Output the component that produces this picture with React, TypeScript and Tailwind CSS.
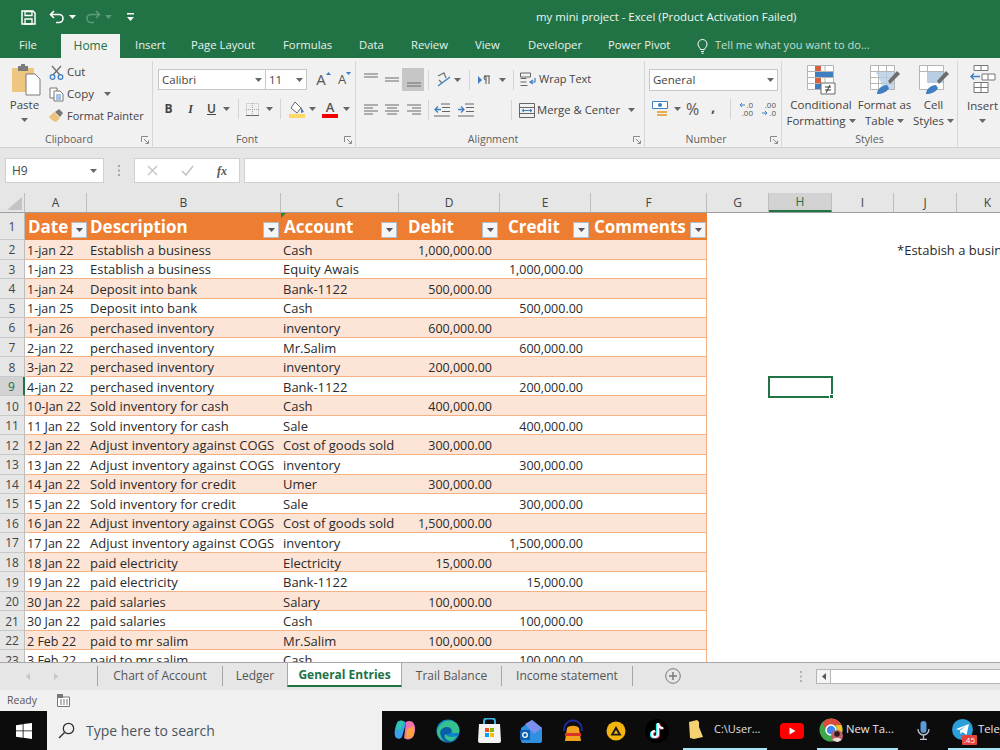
import React from "react";

type Row = [string, string, string, string, string];
const rows: Row[] = [
  ["1-jan 22", "Establish a business", "Cash", "1,000,000.00", ""],
  ["1-jan 23", "Establish a business", "Equity Awais", "", "1,000,000.00"],
  ["1-jan 24", "Deposit into bank", "Bank-1122", "500,000.00", ""],
  ["1-jan 25", "Deposit into bank", "Cash", "", "500,000.00"],
  ["1-jan 26", "perchased inventory", "inventory", "600,000.00", ""],
  ["2-jan 22", "perchased inventory", "Mr.Salim", "", "600,000.00"],
  ["3-jan 22", "perchased inventory", "inventory", "200,000.00", ""],
  ["4-jan 22", "perchased inventory", "Bank-1122", "", "200,000.00"],
  ["10-Jan 22", "Sold inventory for cash", "Cash", "400,000.00", ""],
  ["11 Jan 22", "Sold inventory for cash", "Sale", "", "400,000.00"],
  ["12 Jan 22", "Adjust inventory against COGS", "Cost of goods sold", "300,000.00", ""],
  ["13 Jan 22", "Adjust inventory against COGS", "inventory", "", "300,000.00"],
  ["14 Jan 22", "Sold inventory for credit", "Umer", "300,000.00", ""],
  ["15 Jan 22", "Sold inventory for credit", "Sale", "", "300,000.00"],
  ["16 Jan 22", "Adjust inventory against COGS", "Cost of goods sold", "1,500,000.00", ""],
  ["17 Jan 22", "Adjust inventory against COGS", "inventory", "", "1,500,000.00"],
  ["18 Jan 22", "paid electricity", "Electricity", "15,000.00", ""],
  ["19 Jan 22", "paid electricity", "Bank-1122", "", "15,000.00"],
  ["30 Jan 22", "paid salaries", "Salary", "100,000.00", ""],
  ["30 Jan 22", "paid salaries", "Cash", "", "100,000.00"],
  ["2 Feb 22", "paid to mr salim", "Mr.Salim", "100,000.00", ""],
  ["3 Feb 22", "paid to mr salim", "Cash", "", "100,000.00"],
];

const Caret = ({ c = "#666" }: { c?: string }) => (
  <svg width="7" height="4" viewBox="0 0 7 4"><path d="M0 0h7L3.5 4z" fill={c} /></svg>
);

const Lines = ({ d }: { d: string }) => (
  <svg width="15" height="16" viewBox="0 0 15 16"><path d={d} stroke="#6b6b6b" strokeWidth="1" fill="none" /></svg>
);

const Sep = () => <div className="w-px h-[20px] bg-[#d4d4d4]" />;

const Filter = () => (
  <span className="w-[16px] h-[16px] shrink-0 self-end mb-[2px] flex items-center justify-center bg-[#f3f5f8] border border-[#b4bcc6]">
    <Caret c="#555" />
  </span>
);

function Group({ label, launcher = true, className, children }: { label: string; launcher?: boolean; className: string; children: React.ReactNode }) {
  return (
    <div className={"flex flex-col shrink-0 border-r border-[#d6d6d6] mt-[3px] " + className}>
      <div className="h-[72px] flex flex-col">{children}</div>
      <div className="h-[14px] flex items-center">
        <span className={"flex-1 text-center text-[10.6px] text-[#5f5f5f] " + (launcher ? "pr-[3px]" : "")}>{label}</span>
        {launcher && (
          <svg className="mr-[3px]" width="8" height="8" viewBox="0 0 8 8"><path d="M.5 6V.5H7M3 3l4 4M4.5 7.5h3v-3" stroke="#8a8a8a" fill="none" /></svg>
        )}
      </div>
    </div>
  );
}

const StyleBtn = ({ icon, a, b, w }: { icon: React.ReactNode; a: string; b: string; w: string }) => (
  <div className={"flex flex-col items-center shrink-0 " + w}>
    <div className="h-[35px] mt-[1px] flex items-center">{icon}</div>
    <span className="text-[11.5px] leading-[16px] text-[#444] whitespace-nowrap">{a}</span>
    <span className="text-[11.5px] leading-[16px] text-[#444] whitespace-nowrap flex items-center gap-[3px]">{b}<Caret /></span>
  </div>
);

const colH: [string, string][] = [
  ["A", "w-[62px]"], ["B", "w-[194px]"], ["C", "w-[118px]"], ["D", "w-[101px]"], ["E", "w-[91px]"], ["F", "w-[116px]"],
  ["G", "w-[62px]"], ["H", "w-[63px]"], ["I", "w-[62px]"], ["J", "w-[63px]"], ["K", "w-[62px]"],
];

const Tab = ({ t, className = "" }: { t: string; className?: string }) => (
  <span className={"text-[11.3px] -mt-[1px] text-[#e8f1ec] whitespace-nowrap " + className}>{t}</span>
);

export default function App() {
  return (
    <div className="w-[1000px] h-[750px] overflow-hidden flex flex-col bg-[#e6e6e6] font-['Open_Sans',sans-serif] text-[#333]">
      {/* title */}
      <div className="h-[34px] shrink-0 bg-[#217346] flex items-center">
        <svg className="ml-[21px]" width="15" height="15" viewBox="0 0 15 15"><path d="M1 1h11l2 2v11H1z" fill="none" stroke="#fff" strokeWidth="1.5" /><path d="M4 1.5h7v4H4zM4 9h7v5H4z" fill="none" stroke="#fff" strokeWidth="1.3" /></svg>
        <svg className="ml-[13px]" width="16" height="14" viewBox="0 0 16 14"><path d="M5 1 1.5 4.500 5 8M2 4.500h8a4 4 0 0 1 0 8H7" stroke="#fff" strokeWidth="1.6" fill="none" /></svg>
        <span className="ml-[4px]"><Caret c="#fff" /></span>
        <svg className="ml-[9px]" width="16" height="14" viewBox="0 0 16 14"><path d="M11 1l3.500 3.500L11 8M14 4.500H6a4 4 0 0 0 0 8h3" stroke="#5c9a78" strokeWidth="1.6" fill="none" /></svg>
        <span className="ml-[4px]"><Caret c="#5c9a78" /></span>
        <svg className="ml-[15px]" width="7" height="8" viewBox="0 0 7 8"><path d="M0 0h7v1.500H0zM0 4h7L3.500 8z" fill="#fff" /></svg>
        <span className="ml-[402px] text-[11.4px] text-[#f0f6f2] whitespace-nowrap">my mini project - Excel (Product Activation Failed)</span>
      </div>
      {/* tabs */}
      <div className="h-[24px] shrink-0 bg-[#217346] flex items-center">
        <Tab t="File" className="ml-[19px] w-[42px]" />
        <span className="w-[59px] h-full bg-[#f1f1f1] text-[#217346] text-[12px] flex items-center justify-center">Home</span>
        <Tab t="Insert" className="ml-[15px] w-[56px]" />
        <Tab t="Page Layout" className="w-[92px]" />
        <Tab t="Formulas" className="w-[76px]" />
        <Tab t="Data" className="w-[52px]" />
        <Tab t="Review" className="w-[64px]" />
        <Tab t="View" className="w-[53px]" />
        <Tab t="Developer" className="w-[80px]" />
        <Tab t="Power Pivot" className="w-[89px]" />
        <svg width="11" height="15" viewBox="0 0 11 15"><path d="M3.500 10.500C3 8.500 1 8 1 5a4.500 4.500 0 0 1 9 0c0 3-2 3.500-2.500 5.500zM4 12.500h3M4.500 14.300h2" stroke="#fff" fill="none" /></svg>
        <span className="ml-[7px] -mt-[1px] text-[11.1px] text-[#c7dccf] whitespace-nowrap">Tell me what you want to do...</span>
      </div>
      {/* ribbon */}
      <div className="h-[90px] shrink-0 bg-[#f1f1f1] border-b border-[#d2d2d2] flex">
        <Group label="Clipboard" className="w-[153px]">
          <div className="flex h-full">
            <div className="w-[49px] flex flex-col items-center">
              <svg className="mt-[3px] ml-[3px]" width="30" height="32" viewBox="0 0 30 32">
                <path d="M1 4h22v24H1z" fill="#efc67f" /><path d="M7 2h10v5H7z" fill="#7b7b7b" /><path d="M10 0h4v3h-4z" fill="#7b7b7b" />
                <path d="M15 10h9l5 5v16H15z" fill="#fff" stroke="#7b7b7b" />
              </svg>
              <span className="text-[11.5px] leading-[16px] mt-[1px] text-[#444]">Paste</span>
              <span className="mt-[5px]"><Caret /></span>
            </div>
            <div className="flex flex-col gap-[6px] pt-[3px] text-[11.5px] leading-[16px] text-[#444]">
              <div className="flex items-center gap-[3px] h-[16px]">
                <svg width="15" height="15" viewBox="0 0 15 15"><path d="M3 1l8 9M12 1L4 10" stroke="#6d6d6d" strokeWidth="1.3" /><circle cx="3.500" cy="12" r="2.300" fill="none" stroke="#3f7fc1" strokeWidth="1.300" /><circle cx="11.500" cy="12" r="2.300" fill="none" stroke="#3f7fc1" strokeWidth="1.300" /></svg>
                <span>Cut</span>
              </div>
              <div className="flex items-center gap-[3px] h-[16px]">
                <svg width="15" height="15" viewBox="0 0 15 15"><path d="M1 1h7v10H1z" fill="#fff" stroke="#777" /><path d="M5 4h6l3 3v7H5z" fill="#fff" stroke="#777" /><path d="M7 8h5M7 10h5M7 12h5" stroke="#4a86c5" /></svg>
                <span>Copy</span><span className="ml-[7px]"><Caret /></span>
              </div>
              <div className="flex items-center gap-[3px] h-[16px]">
                <svg width="15" height="14" viewBox="0 0 15 14"><path d="M0 8l5-5 6 6-4 4C5 13 2 10 0 8z" fill="#eec27b" /><path d="M6 3l4-3 4 4-3 4z" fill="#777" /></svg>
                <span className="text-[11px]">Format Painter</span>
              </div>
            </div>
          </div>
        </Group>
        <Group label="Font" className="w-[203px]">
          <div className="flex items-center h-[21px] mt-[8px] pl-[5px]">
            <div className="w-[108px] h-[21px] bg-white border border-[#c6c6c6] flex items-center justify-between px-[3px] text-[11.5px] text-[#444]"><span>Calibri</span><Caret /></div>
            <div className="w-[41px] h-[21px] bg-white border border-[#c6c6c6] border-l-0 flex items-center justify-between px-[3px] text-[11.5px] text-[#444]"><span>11</span><Caret /></div>
            <span className="ml-[6px] text-[15px] leading-[21px] text-[#555] w-[21px] flex items-start justify-center">A<svg className="mt-[3px]" width="5" height="3" viewBox="0 0 5 3"><path d="M0 3h5L2.500 0z" fill="#3f7fc1" /></svg></span>
            <span className="text-[13px] leading-[21px] text-[#555] w-[21px] flex items-start justify-center">A<svg className="mt-[3px]" width="5" height="3" viewBox="0 0 5 3"><path d="M0 0h5L2.500 3z" fill="#3f7fc1" /></svg></span>
          </div>
          <div className="flex items-center h-[20px] mt-[9px] pl-[10px] text-[12px] text-[#444]">
            <span className="w-[11px] text-center font-bold">B</span>
            <span className="w-[11px] ml-[11px] text-center italic font-semibold font-['Liberation_Serif',serif]">I</span>
            <span className="w-[11px] ml-[10px] text-center underline font-semibold">U</span>
            <span className="ml-[6px]"><Caret /></span>
            <span className="ml-[8px]"><Sep /></span>
            <svg className="ml-[7px]" width="13" height="13" viewBox="0 0 13 13"><path d="M.5.500h12v12H.5z" fill="none" stroke="#b5b5b5" strokeDasharray="1 1" /><path d="M6.500 0v13M0 6.500h13" stroke="#a0a0a0" strokeDasharray="1 1" /><path d="M0 12.500h13" stroke="#666" /></svg>
            <span className="ml-[7px]"><Caret /></span>
            <span className="ml-[7px]"><Sep /></span>
            <svg className="ml-[8px]" width="16" height="17" viewBox="0 0 16 17"><path d="M6 1l6 6-4 5-6-5z" fill="#fff" stroke="#666" /><path d="M12 6l3 5-3 1z" fill="#3f7fc1" /><path d="M0 13h16v4H0z" fill="#ffd966" /></svg>
            <span className="ml-[4px]"><Caret /></span>
            <span className="ml-[6px] flex flex-col items-center w-[16px]">
              <span className="text-[13px] leading-[13px] font-semibold text-[#555]">A</span>
              <span className="w-[16px] h-[4px] bg-[#f00000]" />
            </span>
            <span className="ml-[5px]"><Caret /></span>
          </div>
        </Group>
        <Group label="Alignment" className="w-[289px]">
          <div className="flex items-center h-[23px] mt-[7px] pl-[7px]">
            <span className="w-[15px]"><Lines d="M1 2h14M1 5h14" /></span>
            <span className="w-[15px] ml-[6px]"><Lines d="M1 6h14M1 9h14" /></span>
            <span className="w-[22px] h-[23px] ml-[3px] bg-[#c6c6c6] flex items-center justify-center"><Lines d="M1 11h14M1 14h14" /></span>
            <span className="ml-[4px]"><Sep /></span>
            <svg className="ml-[7px]" width="15" height="15" viewBox="0 0 15 15"><path d="M2 4l6-3 2 5M3 8l3 3" stroke="#777" strokeWidth="1.300" fill="none" /><path d="M2 14l12-9" stroke="#3f7fc1" strokeWidth="1.300" /></svg>
            <span className="ml-[3px]"><Caret /></span>
            <span className="ml-[8px]"><Sep /></span>
            <svg className="ml-[8px]" width="13" height="10" viewBox="0 0 13 10"><path d="M0 1l4 4-4 4z" fill="#3f7fc1" /><path d="M6 1h6M8 1v8M11 1v8M8 5a2 2 0 0 1-2-2 2 2 0 0 1 2-2" stroke="#555" fill="none" /></svg>
            <span className="ml-[8px]"><Caret /></span>
            <span className="ml-[7px]"><Sep /></span>
            <svg className="ml-[6px]" width="17" height="16" viewBox="0 0 17 16"><path d="M.5 1h10v4H.5zM.5 6.500h6M.5 10h6M.5 13.500h7" stroke="#666" fill="none" /><path d="M10 10h5V6M13 8l-3 2 3 2" stroke="#3f7fc1" fill="none" strokeWidth="1.200" /></svg>
            <span className="ml-[2px] -mt-[1px] text-[11px] leading-[16px] text-[#444] whitespace-nowrap">Wrap Text</span>
          </div>
          <div className="flex items-center h-[20px] mt-[9px] pl-[7px]">
            <span className="w-[15px]"><Lines d="M1 3h14M1 6h9M1 9h14M1 12h9" /></span>
            <span className="w-[15px] ml-[6px]"><Lines d="M1 3h14M3 6h10M1 9h14M3 12h10" /></span>
            <span className="w-[15px] ml-[7px]"><Lines d="M1 3h14M6 6h9M1 9h14M6 12h9" /></span>
            <span className="ml-[7px]"><Sep /></span>
            <svg className="ml-[5px]" width="16" height="14" viewBox="0 0 16 14"><path d="M7 1h9M8 4.500h8M8 8.500h8M0 13h16" stroke="#666" /><path d="M7 6.500H1M4 3.500l-3 3 3 3" stroke="#3f7fc1" strokeWidth="1.300" fill="none" /></svg>
            <svg className="ml-[8px]" width="16" height="14" viewBox="0 0 16 14"><path d="M7 1h9M8 4.500h8M8 8.500h8M0 13h16" stroke="#666" /><path d="M0 6.500h6M3 3.500l3 3-3 3" stroke="#3f7fc1" strokeWidth="1.300" fill="none" /></svg>
            <span className="ml-[37px]"><Sep /></span>
            <svg className="ml-[7px]" width="16" height="15" viewBox="0 0 16 15"><path d="M.5.500h15v14H.5zM.5 4.500h15M.5 10.500h15" stroke="#666" fill="none" /><path d="M3 7.500h10M5 6l-2 1.500L5 9M11 6l2 1.500L11 9" stroke="#3f7fc1" fill="none" /></svg>
            <span className="ml-[2px] text-[11.3px] leading-[16px] text-[#444] whitespace-nowrap">Merge &amp; Center</span>
            <span className="ml-[8px]"><Caret /></span>
          </div>
        </Group>
        <Group label="Number" className="w-[137px]">
          <div className="w-[129px] h-[22px] ml-[4px] mt-[8px] bg-white border border-[#c6c6c6] flex items-center justify-between px-[3px] text-[11.5px] text-[#444]"><span>General</span><Caret /></div>
          <div className="flex items-center h-[20px] mt-[8px] pl-[7px]">
            <svg width="16" height="16" viewBox="0 0 16 16"><path d="M.5.500h15v7H.5z" fill="#fff" stroke="#3f7fc1" /><circle cx="8" cy="4" r="2" fill="#3f7fc1" /><path d="M5 10h10v2H5zM5 13h10v2H5z" fill="#e9ad4f" /></svg>
            <span className="ml-[6px]"><Caret /></span>
            <span className="ml-[5px] w-[16px] text-[16px] leading-[20px] text-[#555]">%</span>
            <span className="ml-[9px] w-[5px] -mt-[5px] text-[15px] leading-[15px] font-bold text-[#555]">,</span>
            <span className="ml-[14px]"><Sep /></span>
            <span className="ml-[6px] flex flex-col w-[16px] items-end text-[8px] leading-[8px] text-[#555]">
              <span className="flex items-center gap-px"><svg width="6" height="6" viewBox="0 0 6 6"><path d="M6 3H1M3 1 1 3l2 2" stroke="#3f7fc1" fill="none" /></svg>.0</span>
              <span>.00</span>
            </span>
            <span className="ml-[7px] flex flex-col w-[16px] items-end text-[8px] leading-[8px] text-[#555]">
              <span>.00</span>
              <span className="flex items-center gap-px"><svg width="6" height="6" viewBox="0 0 6 6"><path d="M0 3h5M3 1l2 2-2 2" stroke="#3f7fc1" fill="none" /></svg>.0</span>
            </span>
          </div>
        </Group>
        <Group label="Styles" launcher={false} className="w-[176px]">
          <div className="flex">
            <StyleBtn w="w-[78px]" a="Conditional" b="Formatting" icon={
              <svg width="29" height="30" viewBox="0 0 29 30"><path d="M.5.500h26v24H.5zM.5 6.500h26M.5 12.500h26M.5 18.500h26M9 .5v24M18 .5v24" stroke="#b5b5b5" fill="#fff" /><path d="M8 1h6v5H8zM8 13h6v5H8z" fill="#d9603c" /><path d="M8 7h18v5H8zM8 19h6v5H8z" fill="#3f7fc1" /><path d="M14 18h14v11H14z" fill="#fff" stroke="#666" /><path d="M18 22h6M18 25h6M23 20l-4 8" stroke="#333" /></svg>
            } />
            <StyleBtn w="w-[49px]" a="Format as" b="Table" icon={
              <svg width="30" height="30" viewBox="0 0 30 30"><path d="M.5.500h24v24H.5zM.5 6.500h24M.5 12.500h24M.5 18.500h24M8.500.5v24M16.500.5v24" stroke="#b5b5b5" fill="#fff" /><path d="M6 7h18v17H14z" fill="#b9cde5" opacity=".8" /><path d="M18 16L27 6l3 3-10 10z" fill="#6d6d6d" /><path d="M7 29c0-5 5-9 10-9l2 3c-2 4-7 6-12 6z" fill="#3f7fc1" /></svg>
            } />
            <StyleBtn w="w-[49px]" a="Cell" b="Styles" icon={
              <svg width="30" height="30" viewBox="0 0 30 30"><path d="M.5.500h24v24H.5zM.5 6.500h24M8.500.5v6" stroke="#b5b5b5" fill="#fff" /><path d="M8 7h16v11H8z" fill="#b9cde5" /><path d="M18 16L27 6l3 3-10 10z" fill="#6d6d6d" /><path d="M7 29c0-5 5-9 10-9l2 3c-2 4-7 6-12 6z" fill="#3f7fc1" /></svg>
            } />
          </div>
        </Group>
        <div className="flex-1 flex flex-col items-center mt-[3px] pl-[7px]">
          <svg className="mt-[4px]" width="26" height="29" viewBox="0 0 26 29"><path d="M4 .5h14v5H4zM11 .5v5M12 9h13v6H12zM18 9v6M4 17.500h14v10H4zM11 17.500v10M4 22.500h14" stroke="#777" fill="#fff" /><path d="M10 11.500H1M4 8.500l-3 3 3 3" stroke="#3f7fc1" strokeWidth="1.500" fill="none" /></svg>
          <span className="text-[11.5px] leading-[16px] text-[#444] mt-[4px]">Insert</span>
          <span className="mt-[5px]"><Caret /></span>
        </div>
      </div>
      {/* formula bar */}
      <div className="h-[45px] shrink-0 bg-[#e6e6e6] flex items-start pt-[10px] pl-[5px]">
        <div className="w-[99px] h-[25px] bg-white border border-[#d0d0d0] flex items-center justify-between pl-[6px] pr-[6px] text-[12px] text-[#444]"><span>H9</span><Caret /></div>
        <svg className="ml-[13px] mt-[7px]" width="3" height="11" viewBox="0 0 3 11"><path d="M1 0h2v2H1zM1 4.500h2v2H1zM1 9h2v2H1z" fill="#a6a6a6" /></svg>
        <div className="ml-[14px] w-[106px] h-[25px] bg-white border border-[#d0d0d0] flex items-center">
          <svg className="ml-[12px]" width="11" height="11" viewBox="0 0 11 11"><path d="M1 1l9 9M10 1l-9 9" stroke="#c4c4c4" strokeWidth="1.400" /></svg>
          <svg className="ml-[23px]" width="13" height="11" viewBox="0 0 13 11"><path d="M1 6l4 4 7-9" stroke="#c4c4c4" strokeWidth="1.600" fill="none" /></svg>
          <span className="ml-[23px] text-[12px] italic font-['Liberation_Serif',serif] text-[#555] font-bold">fx</span>
        </div>
        <div className="ml-[4px] flex-1 h-[25px] bg-white border border-[#d0d0d0] border-r-0" />
      </div>
      {/* sheet */}
      <div className="flex-1 min-h-0 overflow-hidden bg-white text-[13px] leading-[19px] text-[#2a2a2a]">
        <div className="flex h-[19px] bg-[#e6e6e6] border-b border-[#a0a0a0] box-content">
          <div className="w-[25px] shrink-0 border-r border-[#bdbdbd] flex items-end justify-end p-[2px]">
            <svg width="15" height="13" viewBox="0 0 15 13"><path d="M15 0v13H0z" fill="#c4c4c4" /></svg>
          </div>
          {colH.map(([c, w]) => (
            <div key={c} className={"shrink-0 flex items-center justify-center text-[12px] border-r border-[#bdbdbd] " + w + (c === "H" ? " bg-[#d2d2d2] text-[#217346] border-b-2 border-b-[#217346]" : " text-[#444]")}>{c}</div>
          ))}
        </div>
        <div className="flex h-[27px]">
          <div className="w-[25px] shrink-0 bg-[#e6e6e6] border-r border-[#bdbdbd] border-b border-b-[#c8c8c8] flex items-center justify-center text-[#444] text-[12px]">1</div>
          <div className="w-[682px] shrink-0 flex bg-[#ed7d31] text-white font-bold text-[17px] whitespace-nowrap items-stretch">
            <div className="w-[62px] pl-[3px] flex items-center justify-between">Date<Filter /></div>
            <div className="w-[194px] pl-[3px] pr-[2px] flex items-center justify-between">Description<Filter /></div>
            <div className="w-[118px] pl-[3px] pr-[2px] flex items-center justify-between relative">
              <span className="absolute left-0 top-0 w-0 h-0 border-t-[5px] border-t-[#1e8a3c] border-r-[5px] border-r-transparent" />
              Account<Filter />
            </div>
            <div className="w-[101px] pl-[9px] pr-[2px] flex items-center justify-between">Debit<Filter /></div>
            <div className="w-[91px] pl-[8px] pr-[2px] flex items-center justify-between">Credit<Filter /></div>
            <div className="w-[116px] pl-[3px] pr-[1px] flex items-center justify-between">Comments<Filter /></div>
          </div>
        </div>
        {rows.map((r, i) => {
          const n = i + 2;
          const sel = n === 9;
          return (
            <div key={n} className="flex h-[19.55px]">
              <div className={"w-[25px] shrink-0 border-b border-b-[#c8c8c8] flex items-center justify-center pt-[1px] text-[12px] " + (sel ? "bg-[#d2d2d2] text-[#217346] border-r-2 border-r-[#217346]" : "bg-[#e6e6e6] text-[#444] border-r border-r-[#bdbdbd]")}>{n}</div>
              <div className={"w-[682px] shrink-0 flex items-center pt-[2px] whitespace-nowrap border-b border-b-[#f4b183] border-r border-r-[#f4b183] " + (i % 2 === 0 ? "bg-[#fce4d6]" : "bg-white")}>
                <div className="w-[62px] pl-[2px] text-[12.5px]">{r[0]}</div>
                <div className="w-[194px] pl-[3px]">{r[1]}</div>
                <div className="w-[118px] pl-[2px] overflow-hidden">{r[2]}</div>
                <div className="w-[101px] pr-[8px] text-right text-[12.5px]">{r[3]}</div>
                <div className="w-[91px] pr-[8px] text-right text-[12.5px]">{r[4]}</div>
              </div>
              <div className="w-[62px] shrink-0" />
              <div className={"w-[65px] shrink-0 self-start " + (sel ? "-ml-px -mt-[1px] h-[22px] border-2 border-[#217346] relative" : "-ml-px")}>
                {sel && <span className="absolute -right-[3px] -bottom-[3px] w-[5px] h-[5px] bg-[#217346] border border-white" />}
              </div>
              <div className="w-[61px] shrink-0" />
              {n === 2 && <div className="pl-[3px] pt-[1px] whitespace-nowrap">*Estabish a business</div>}
            </div>
          );
        })}
      </div>
      {/* sheet tabs */}
      <div className="h-[28px] shrink-0 bg-[#e6e6e6] border-t border-t-[#a8a8a8] flex items-start text-[12px] text-[#555] whitespace-nowrap">
        <div className="w-[98px] h-[20px] mt-[3px] border-r border-[#a6a6a6] flex items-center pl-[26px] gap-[24px]">
          <svg width="4" height="7" viewBox="0 0 4 7"><path d="M4 0v7L0 3.500z" fill="#c6c6c6" /></svg>
          <svg width="4" height="7" viewBox="0 0 4 7"><path d="M0 0v7l4-3.500z" fill="#c6c6c6" /></svg>
        </div>
        <div className="w-[125px] h-[20px] mt-[3px] border-r border-[#a6a6a6] flex items-center justify-center">Chart of Account</div>
        <div className="w-[64px] h-[20px] mt-[3px] flex items-center justify-center">Ledger</div>
        <div className="w-[115px] h-[24px] pt-[2px] bg-white border-x border-[#a8a8a8] border-b-2 border-b-[#217346] flex items-center justify-center font-bold text-[#217346]">General Entries</div>
        <div className="w-[100px] h-[20px] mt-[3px] border-r border-[#a6a6a6] flex items-center justify-center">Trail Balance</div>
        <div className="w-[131px] h-[20px] mt-[3px] border-r border-[#a6a6a6] flex items-center justify-center">Income statement</div>
        <svg className="ml-[32px] mt-[5px]" width="16" height="16" viewBox="0 0 16 16"><circle cx="8" cy="8" r="7.300" fill="none" stroke="#7a7a7a" /><path d="M8 4v8M4 8h8" stroke="#7a7a7a" strokeWidth="1.500" /></svg>
        <svg className="ml-[119px] mt-[8px]" width="3" height="11" viewBox="0 0 3 11"><path d="M0 0h2v2H0zM0 4.500h2v2H0zM0 9h2v2H0z" fill="#b0b0b0" /></svg>
        <div className="ml-[13px] mt-[6px] flex-1 h-[15px] flex border border-[#b5b5b5] border-r-0 bg-white">
          <div className="w-[14px] border-r border-[#b5b5b5] bg-[#f4f4f4] flex items-center justify-center">
            <svg width="4" height="7" viewBox="0 0 4 7"><path d="M4 0v7L0 3.500z" fill="#555" /></svg>
          </div>
        </div>
      </div>
      {/* status */}
      <div className="h-[21px] shrink-0 bg-[#f1f1f1] flex items-center text-[10.5px] text-[#555]">
        <span className="ml-[7px]">Ready</span>
        <svg className="ml-[20px]" width="13" height="13" viewBox="0 0 13 13"><path d="M.5 3h12v9.500H.5z" fill="#fff" stroke="#777" /><path d="M0 0h6v4H0z" fill="#777" /><path d="M3 6h2M6 6h2M9 6h2M3 8h2M6 8h2M9 8h2M3 10h2M6 10h2M9 10h2" stroke="#777" /></svg>
      </div>
      {/* taskbar */}
      <div className="h-[39px] shrink-0 bg-[#0c0c0c] flex items-center text-white whitespace-nowrap">
        <div className="w-[47px] flex justify-center">
          <svg width="16" height="16" viewBox="0 0 16 16"><path d="M0 2.200 6.700 1.200v6.300H0zM7.500 1.100 16 0v7.500H7.500zM0 8.300h6.700v6.500L0 13.800zM7.500 8.300H16V16l-8.500-1.200z" fill="#fff" /></svg>
        </div>
        <div className="w-[335px] h-[39px] bg-[#f0f0f0] flex items-center text-[14px] text-[#4a5560]">
          <svg className="ml-[11px]" width="17" height="17" viewBox="0 0 17 17"><circle cx="10.500" cy="6.500" r="5.200" fill="none" stroke="#333" strokeWidth="1.300" /><path d="M6.500 10.500 1 16" stroke="#333" strokeWidth="1.500" /></svg>
          <span className="ml-[11px]">Type here to search</span>
        </div>
        <div className="w-[44px] flex justify-center ml-[1px]">
          <svg width="22" height="21" viewBox="0 0 22 21"><path d="M3 3c2-3 7-3 9 0l-4 14c-2 3-6 2-7-1-1-4 0-9 2-13z" fill="#3aa0e8" /><path d="M3 3c2-3 5-3 7-1L7 10 2 9z" fill="#2dc4b0" /><path d="M12 2c3-2 7-1 8 2 2 4 1 10-1 13-2 3-7 3-9 1z" fill="#f06fb0" /><path d="M13 9l7-3 0 8c-1 4-5 5-8 4z" fill="#f6a53d" /></svg>
        </div>
        <div className="w-[42px] flex justify-center">
          <svg width="24" height="24" viewBox="0 0 24 24"><circle cx="12" cy="12" r="11.500" fill="#0d84c9" /><path d="M1 12C3 3 13-2 20 4c3 3 4 7 3 10H9c1 4 7 5 12 3-3 5-9 7-13 5C3 20 1 16 1 12z" fill="#35c18f" /><path d="M4 13c2-6 11-7 12-1 0 2-2 3-5 3-3 0-3 3-1 5 2 2 4 2 6 2-5 3-11 0-12-9z" fill="#0a5ea8" /></svg>
        </div>
        <div className="w-[40px] flex justify-center">
          <svg width="23" height="25" viewBox="0 0 23 25"><path d="M6 7V3c0-2 2-2.500 3-2.500h5c1 0 3 .5 3 2.500v4" stroke="#3bb2e0" strokeWidth="2" fill="none" /><path d="M1 6h21l1 17c0 1-1 2-2 2H2c-1 0-2-1-2-2z" fill="#f3f3f3" /><path d="M7 10h4v4H7z" fill="#f25022" /><path d="M12 10h4v4h-4z" fill="#7fba00" /><path d="M7 15h4v4H7z" fill="#00a4ef" /><path d="M12 15h4v4h-4z" fill="#ffb900" /></svg>
        </div>
        <div className="w-[44px] flex justify-center">
          <svg width="23" height="24" viewBox="0 0 23 24"><path d="M1 9 12 1l10 8v13c0 1-1 2-2 2H3c-1 0-2-1-2-2z" fill="#2f8fe0" /><path d="M5 5l7-4 10 8-8 6z" fill="#7d8fee" /><rect x="0" y="11" width="10" height="10" rx="1" fill="#0f5fb0" /><circle cx="5" cy="16" r="2.300" fill="none" stroke="#fff" strokeWidth="1.300" /></svg>
        </div>
        <div className="w-[40px] flex justify-center">
          <svg width="22" height="24" viewBox="0 0 22 24"><path d="M2 12C2 5 6 1.500 11 1.500S20 5 20 12" stroke="#1c2a9c" strokeWidth="2" fill="none" /><path d="M5 9c2-3 10-3 12 0l2 13H3z" fill="#f0a21c" /><path d="M3 14h16v3H3z" fill="#d9322a" /></svg>
        </div>
        <div className="w-[46px] flex justify-center">
          <svg width="20" height="20" viewBox="0 0 20 20"><circle cx="10" cy="10" r="9.500" fill="#f2b50f" /><path d="M10 5 4.500 14.500h11zM10 9l2.300 3.700H7.700z" fill="#1a1a1a" fillRule="evenodd" /></svg>
        </div>
        <div className="w-[36px] flex justify-center">
          <svg width="24" height="24" viewBox="0 0 24 24"><circle cx="12" cy="12" r="12" fill="#000" /><path d="M13 4v11a3 3 0 1 1-3-3M13 4c.5 3 2.500 5 5 5" stroke="#25f4ee" strokeWidth="2.200" fill="none" transform="translate(-1 .5)" /><path d="M13 4v11a3 3 0 1 1-3-3M13 4c.5 3 2.500 5 5 5" stroke="#fe2c55" strokeWidth="2.200" fill="none" transform="translate(1 .5)" /><path d="M13 4v11a3 3 0 1 1-3-3M13 4c.5 3 2.500 5 5 5" stroke="#fff" strokeWidth="2" fill="none" /></svg>
        </div>
        <div className="w-[84px] ml-[8px] h-full flex items-center pl-[6px] border-b-2 border-b-[#a8e6f5]">
          <svg width="14" height="19" viewBox="0 0 14 19"><path d="M0 2l8-2 2 2v5l4 10-9 2-4-1z" fill="#f5d271" /></svg>
          <span className="ml-[11px] text-[11px] text-[#e0e0e0]">C:\User...</span>
        </div>
        <div className="w-[50px] flex justify-center">
          <svg width="24" height="16" viewBox="0 0 24 16"><rect width="24" height="16" rx="4" fill="#f00" /><path d="M9.500 4.500v7l6-3.500z" fill="#fff" /></svg>
        </div>
        <div className="w-[81px] h-full flex items-center pl-[2px] border-b-2 border-b-[#a8e6f5]">
          <svg width="24" height="24" viewBox="0 0 24 24">
            <circle cx="12" cy="12" r="11.500" fill="#3fa64a" /><path d="M12 .5A11.500 11.500 0 0 1 22.500 7H12L6 10 3.500 5A11.500 11.500 0 0 1 12 .5z" fill="#dd4b3e" /><path d="M22.500 7A11.500 11.500 0 0 1 14 23l5-9-2-7z" fill="#f6c026" /><circle cx="12" cy="12" r="5" fill="#4285f4" stroke="#fff" strokeWidth="1.500" />
            <circle cx="18" cy="18" r="6" fill="#c25f6c" /><circle cx="18" cy="16" r="2.800" fill="#2a1e16" /><path d="M13.500 22c1-3 8-3 9 0l-4 2z" fill="#e8e2d8" />
          </svg>
          <span className="ml-[3px] text-[11.300px] text-[#e8e8e8]">New Ta...</span>
        </div>
        <div className="w-[50px] flex justify-center">
          <svg width="13" height="19" viewBox="0 0 13 19"><rect x="3.500" y="0" width="6" height="12" rx="3" fill="#5b9bd5" /><path d="M1 8c0 3.500 2.500 6 5.500 6s5.500-2.500 5.500-6M6.500 14v4M3 18.500h7" stroke="#b8c4d2" strokeWidth="1.300" fill="none" /></svg>
        </div>
        <div className="flex-1 h-full flex items-center border-b-2 border-b-[#a8e6f5] overflow-hidden pl-[4px]">
          <div className="relative w-[21px] h-[21px] shrink-0 rounded-full bg-[#2a9fd8] flex items-center justify-center">
            <svg width="13" height="11" viewBox="0 0 13 11"><path d="M0 5 13 0 10.500 11 6.500 8l-2 2-.5-3.500L10 2 3 6z" fill="#fff" /></svg>
            <span className="absolute -right-[4px] -bottom-[5px] bg-[#e5423b] text-white text-[8px] leading-[10px] px-[2px] rounded-[1px]">.45</span>
          </div>
          <span className="ml-[5px] text-[11.300px] text-[#e8e8e8]">Telegram</span>
        </div>
      </div>
    </div>
  );
}
